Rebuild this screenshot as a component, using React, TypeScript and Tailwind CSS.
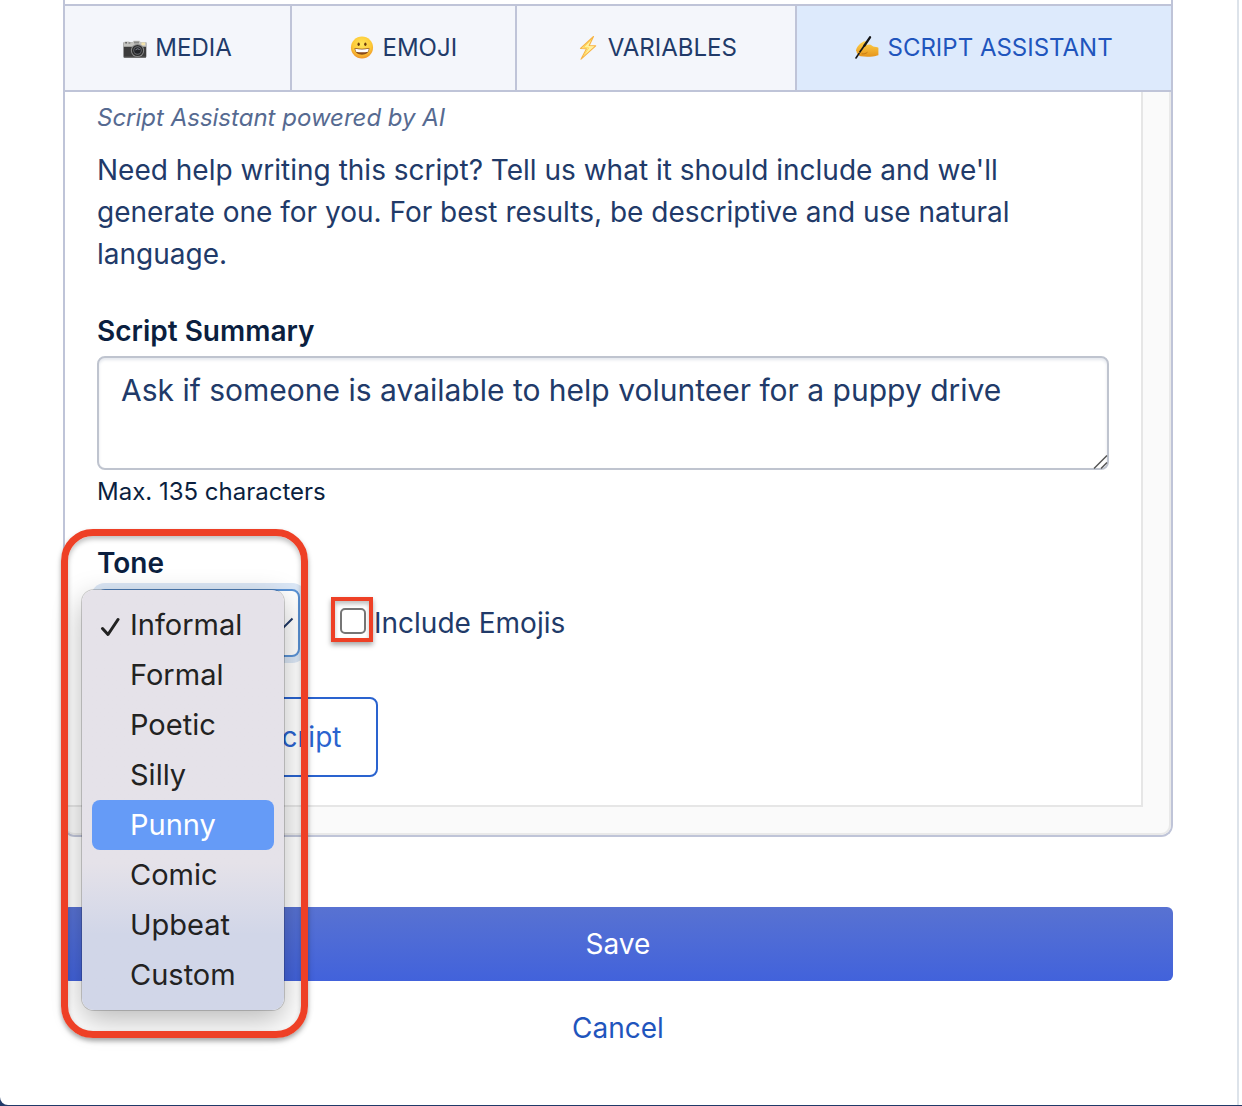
import { useState } from 'react';
import clsx from 'clsx';

const TABS = [
  { id: 'media', label: 'MEDIA', Icon: CameraIcon },
  { id: 'emoji', label: 'EMOJI', Icon: GrinIcon },
  { id: 'variables', label: 'VARIABLES', Icon: BoltIcon },
  { id: 'assistant', label: 'SCRIPT ASSISTANT', Icon: WritingHandIcon },
];

const TONES = ['Informal', 'Formal', 'Poetic', 'Silly', 'Punny', 'Comic', 'Upbeat', 'Custom'];

export default function App() {
  const [activeTab, setActiveTab] = useState('assistant');

  return (
    <div className="flex min-h-screen flex-col bg-[#213a69] pb-px font-['Inter',sans-serif] text-[#213a69]">
      <div className="flex flex-1 flex-col rounded-bl-lg bg-white pr-[3px]">
        <main className="flex-1 border-r-2 border-[#dde3ea] pr-16 pl-[63px]">
          <section className="rounded-b-xl border-x-2 border-b-2 border-[#bfc4d8] pt-1">
            {/* Tabs */}
            <div className="flex divide-x-2 divide-[#bfc4d8] border-y-2 border-[#bfc4d8]" role="tablist">
              {TABS.map(({ id, label, Icon }) => (
                <button
                  key={id}
                  type="button"
                  role="tab"
                  aria-selected={activeTab === id}
                  onClick={() => setActiveTab(id)}
                  className={clsx(
                    'flex h-[84px] flex-auto items-center justify-center gap-2 text-2xl',
                    activeTab === id ? 'bg-[#ddeafc] text-[#1f55bd]' : 'bg-[#f4f6fb]'
                  )}
                >
                  <Icon />
                  {label}
                </button>
              ))}
            </div>

            {/* Assistant panel */}
            <div className="rounded-b-[10px] border-r-2 border-b-2 border-[#e9e9e9] bg-[#fafafa] pr-[26px] pb-[26px]">
              <div className="border-r-2 border-b-2 border-[#e6e6e6] bg-white px-8 pt-2 pb-7">
                <p className="text-2xl leading-9 text-[#566a91] italic">Script Assistant powered by AI</p>
                <p className="mt-[13px] text-[28px] leading-[42px]">
                  Need help writing this script? Tell us what it should include and we'll generate one for you. For
                  best results, be descriptive and use natural language.
                </p>

                <label htmlFor="summary" className="mt-9 block text-[28px] leading-[40px] font-semibold text-[#0b1f3f]">
                  Script Summary
                </label>
                <SummaryField />
                <p className="mt-1 text-2xl leading-9 text-[#0b1f3f]">Max. 135 characters</p>

                <label htmlFor="tone" className="mt-8 block text-[28px] leading-[42px] font-semibold text-[#0b1f3f]">
                  Tone
                </label>
                <div className="mt-[5px] flex items-center">
                  <ToneSelect />
                  <label className="ml-10 flex items-center gap-2 text-[28px] leading-[42px]">
                    <span className="relative mb-1 flex">
                      <input
                        type="checkbox"
                        className="size-[26px] appearance-none rounded-[5px] border-2 border-[#767676] bg-white"
                      />
                      <span className="pointer-events-none absolute -top-[11px] -right-[7px] -bottom-2 -left-[9px] border-4 border-[#ee4026] shadow-[0_3px_5px_rgba(0,0,0,0.35),inset_0_3px_4px_rgba(0,0,0,0.25)]" />
                    </span>
                    Include Emojis
                  </label>
                </div>

                <button
                  type="button"
                  className="mt-10 h-20 rounded-lg border-2 border-[#2a63cf] bg-white px-[35px] text-[28px] text-[#2a63cf]"
                >
                  Generate Script
                </button>
              </div>
            </div>
          </section>

          <button
            type="button"
            className="mt-[70px] h-[74px] w-full rounded-md bg-linear-to-b from-[#5872d2] to-[#4262db] text-[28px] text-white"
          >
            Save
          </button>
          <div className="mt-[26px] text-center">
            <a href="#cancel" className="text-[28px] leading-[42px] text-[#1f55bd]">
              Cancel
            </a>
          </div>
        </main>
      </div>
    </div>
  );
}

function SummaryField() {
  return (
    <div className="relative mt-[5px]">
      <textarea
        id="summary"
        maxLength={135}
        defaultValue="Ask if someone is available to help volunteer for a puppy drive"
        className="block h-[114px] w-full resize-none rounded-lg border-2 border-[#bfc4cf] px-[22px] py-[11px] text-[30px] leading-[42px] shadow-[inset_0_2px_3px_rgba(30,60,110,0.12)] outline-none"
      />
      <svg className="absolute right-0 bottom-0 size-4" viewBox="0 0 16 16" stroke="#555" strokeWidth="1.5">
        <path d="M1 14.5 14 1.5M8 14.5l6-6" />
      </svg>
    </div>
  );
}

function ToneSelect() {
  const [tone, setTone] = useState('Informal');

  return (
    <div className="relative">
      <select
        id="tone"
        value={tone}
        onChange={(e) => setTone(e.target.value)}
        className="block h-[68px] w-[203px] appearance-none rounded-lg border-2 border-[#5b93d6] bg-white px-6 text-[28px] ring-6 ring-[#dbe7f6] outline-none"
      >
        {TONES.map((name) => (
          <option key={name}>{name}</option>
        ))}
      </select>
      <svg className="absolute top-7 right-1.5 h-3 w-6" viewBox="0 0 24 12" fill="none" stroke="#213a69" strokeWidth="2">
        <path d="m4 2 9 9 9.500-9.500" />
      </svg>

      {/* Open menu */}
      <ul
        role="listbox"
        aria-label="Tone"
        className="absolute top-px -left-[15px] z-10 w-[202px] rounded-xl bg-linear-to-b from-[#e5e2e9] from-65% to-[#d1d6e8] to-82% p-[10px] text-[29px] leading-[50px] text-[#222] shadow-[0_0_0_1px_rgba(0,0,0,0.18),0_10px_30px_rgba(0,0,0,0.28)]"
      >
        {TONES.map((name) => (
          <li
            key={name}
            role="option"
            aria-selected={name === tone}
            onClick={() => setTone(name)}
            className={clsx('relative rounded-lg pl-[38px]', name === 'Punny' && 'bg-[#659bf7] text-white')}
          >
            {name === tone && (
              <svg
                className="absolute top-[17px] left-2 h-5 w-5"
                viewBox="0 0 20 20"
                fill="none"
                stroke="currentColor"
                strokeWidth="3"
                strokeLinecap="round"
                strokeLinejoin="round"
              >
                <path d="m2.5 11.5 5.500 6L18 2.500" />
              </svg>
            )}
            {name}
          </li>
        ))}
      </ul>

      <div className="pointer-events-none absolute -top-[60px] -left-9 z-20 h-[509px] w-[247px] rounded-[32px] border-7 border-[#ee4026] shadow-[0_3px_5px_rgba(0,0,0,0.35),inset_0_3px_5px_rgba(0,0,0,0.25)]" />
    </div>
  );
}

function CameraIcon() {
  return (
    <svg className="size-6" viewBox="0 0 24 24">
      <path d="M.5 6.500h22.800V20.500a1.200 1.200 0 0 1-1.200 1.200H1.700A1.200 1.200 0 0 1 .5 20.500z" fill="#3c3c3c" />
      <path d="M.5 6.800 2 5.500h4l1 .8h2.500L10.500 4.800h6l1 1.200h5.300l.5 1v3.800H.5z" fill="#c3c3bf" />
      <path d="M2.200 6h1.800v1.500H2.200zM5.500 6.400h1.800v1.200H5.500z" fill="#666" />
      <path d="M11 5.500h5v2h-5z" fill="#8a8a88" />
      <path d="M18.500 6.500h3.600v2.800h-3.600z" fill="#f3e3ad" />
      <circle cx="14.500" cy="14.500" r="6.600" fill="#8c8c8c" />
      <circle cx="14.500" cy="14.500" r="5.600" fill="#2c2c2c" />
      <circle cx="14.500" cy="14.500" r="4.200" fill="#6a6d72" />
      <circle cx="14.500" cy="14.500" r="3.300" fill="#232428" />
      <path d="M12.500 13.800q2-2 4.200-.2" stroke="#9aa0aa" strokeWidth=".8" fill="none" />
      <path d="M.8 21.200h22.200" stroke="#777" strokeWidth=".8" />
    </svg>
  );
}

function GrinIcon() {
  return (
    <svg className="size-6" viewBox="0 0 25 25">
      <defs>
        <radialGradient id="grin" cx="50%" cy="35%" r="65%">
          <stop offset="0" stopColor="#ffe65c" />
          <stop offset=".65" stopColor="#fdc936" />
          <stop offset="1" stopColor="#ee9328" />
        </radialGradient>
      </defs>
      <circle cx="12.5" cy="12" r="11.5" fill="url(#grin)" />
      <ellipse cx="9" cy="8.6" rx="1.2" ry="1.9" fill="#6b3b0c" />
      <ellipse cx="16" cy="8.6" rx="1.2" ry="1.9" fill="#6b3b0c" />
      <path d="M4.8 12.6q7.7 1.6 15.4 0c0 4.7-3.3 7-7.7 7s-7.7-2.3-7.7-7z" fill="#8a4a1a" />
      <path d="M5.4 13.2q7.1 1.5 14.2 0l-.8 3.2q-6.3 1.2-12.6 0z" fill="#fff" />
    </svg>
  );
}

function BoltIcon() {
  return (
    <svg className="size-6" viewBox="0 0 24 24">
      <path
        d="M17.5.5 4.500 12.500l6 .3L5 23.200 19.700 9.800l-6.500-.3z"
        fill="#fff0a0"
        stroke="#f7b344"
        strokeWidth="1.1"
        strokeLinejoin="round"
      />
      <path d="M15.500 3.500 7.500 11.500l5.200.4-4.500 7" fill="none" stroke="#ffd957" strokeWidth="1" />
    </svg>
  );
}

function WritingHandIcon() {
  return (
    <svg className="size-6" viewBox="0 0 24 24">
      <defs>
        <linearGradient id="hand" x1="0" y1="0" x2="0" y2="1">
          <stop offset="0" stopColor="#ffd24a" />
          <stop offset="1" stopColor="#e6951c" />
        </linearGradient>
      </defs>
      <path
        d="M1.200 13.500C2.500 9.500 7 5.700 9.800 5.300c1.500-.2 2.600.8 2 2.200l-.6 1.700c2.200-1 4.200-1 5.600.2l1.400 1.100c2 .1 3.800.7 5.200 1.300v7.400c-2 .3-3.200 1-5.600 1.300-4.300.4-8 .4-12-.2-1.800-.3-2.400-1.300-2-2.300-1.800-.3-2.400-1.300-2-2.300-.8-.3-1-1.200-.6-2.200z"
        fill="url(#hand)"
      />
      <path d="M6.500 17.800c2.400.4 4.300-.2 6-1.600" stroke="#b96f12" strokeWidth=".8" fill="none" />
      <path d="M15 1.300 9.500 9.500" stroke="#151515" strokeWidth="2.300" strokeLinecap="round" />
      <path d="M9.600 9.300 4.500 16.500" stroke="#151515" strokeWidth="1.700" />
      <path d="M4 17.500 1 22" stroke="#151515" strokeWidth="1.600" strokeLinecap="round" />
    </svg>
  );
}
